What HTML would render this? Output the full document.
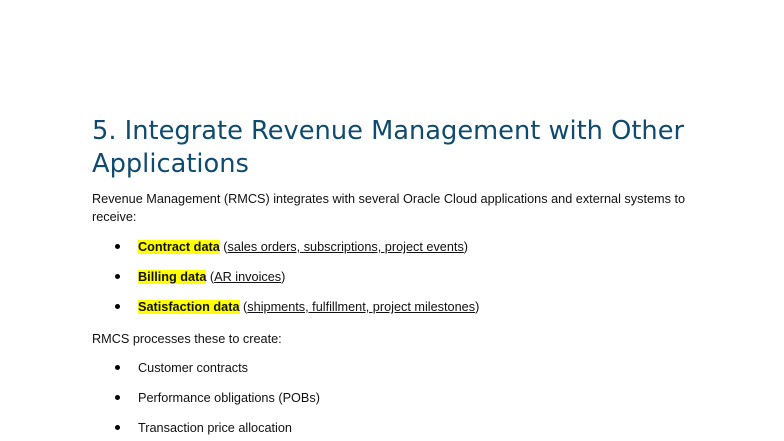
<!DOCTYPE html>
<html><head><meta charset="utf-8"><style>
body{margin:0;width:784px;height:441px;background:#fff;position:relative;overflow:hidden}
.h{position:absolute;left:92px;font-family:"DejaVu Sans",sans-serif;font-size:25.7px;color:#0f4b6e;white-space:nowrap;line-height:30px}
.t{position:absolute;font-family:"Liberation Sans",sans-serif;font-size:12.7px;color:#111;white-space:nowrap;line-height:16px}
.b{position:absolute;left:115px;width:5px;height:5px;border-radius:50%;background:#000}
.hl{background:#ffff00;font-weight:bold}
u{text-decoration:underline}
</style></head><body>
<div class="h" style="top:116px">5. Integrate Revenue Management with Other</div>
<div class="h" style="top:149px">Applications</div>
<div class="t" style="left:92px;top:191px">Revenue Management (RMCS) integrates with several Oracle Cloud applications and external systems to</div>
<div class="t" style="left:92px;top:209px">receive:</div>
<div class="b" style="top:244px"></div><div class="t" style="left:138px;top:239px"><span class="hl">Contract data</span> (<u>sales orders, subscriptions, project events</u>)</div>
<div class="b" style="top:274px"></div><div class="t" style="left:138px;top:269px"><span class="hl">Billing data</span> (<u>AR invoices</u>)</div>
<div class="b" style="top:304px"></div><div class="t" style="left:138px;top:299px"><span class="hl">Satisfaction data</span> (<u>shipments, fulfillment, project milestones</u>)</div>
<div class="t" style="left:92px;top:331px">RMCS processes these to create:</div>
<div class="b" style="top:365px"></div><div class="t" style="left:138px;top:360px">Customer contracts</div>
<div class="b" style="top:395px"></div><div class="t" style="left:138px;top:390px">Performance obligations (POBs)</div>
<div class="b" style="top:425px"></div><div class="t" style="left:138px;top:420px">Transaction price allocation</div>
</body></html>
